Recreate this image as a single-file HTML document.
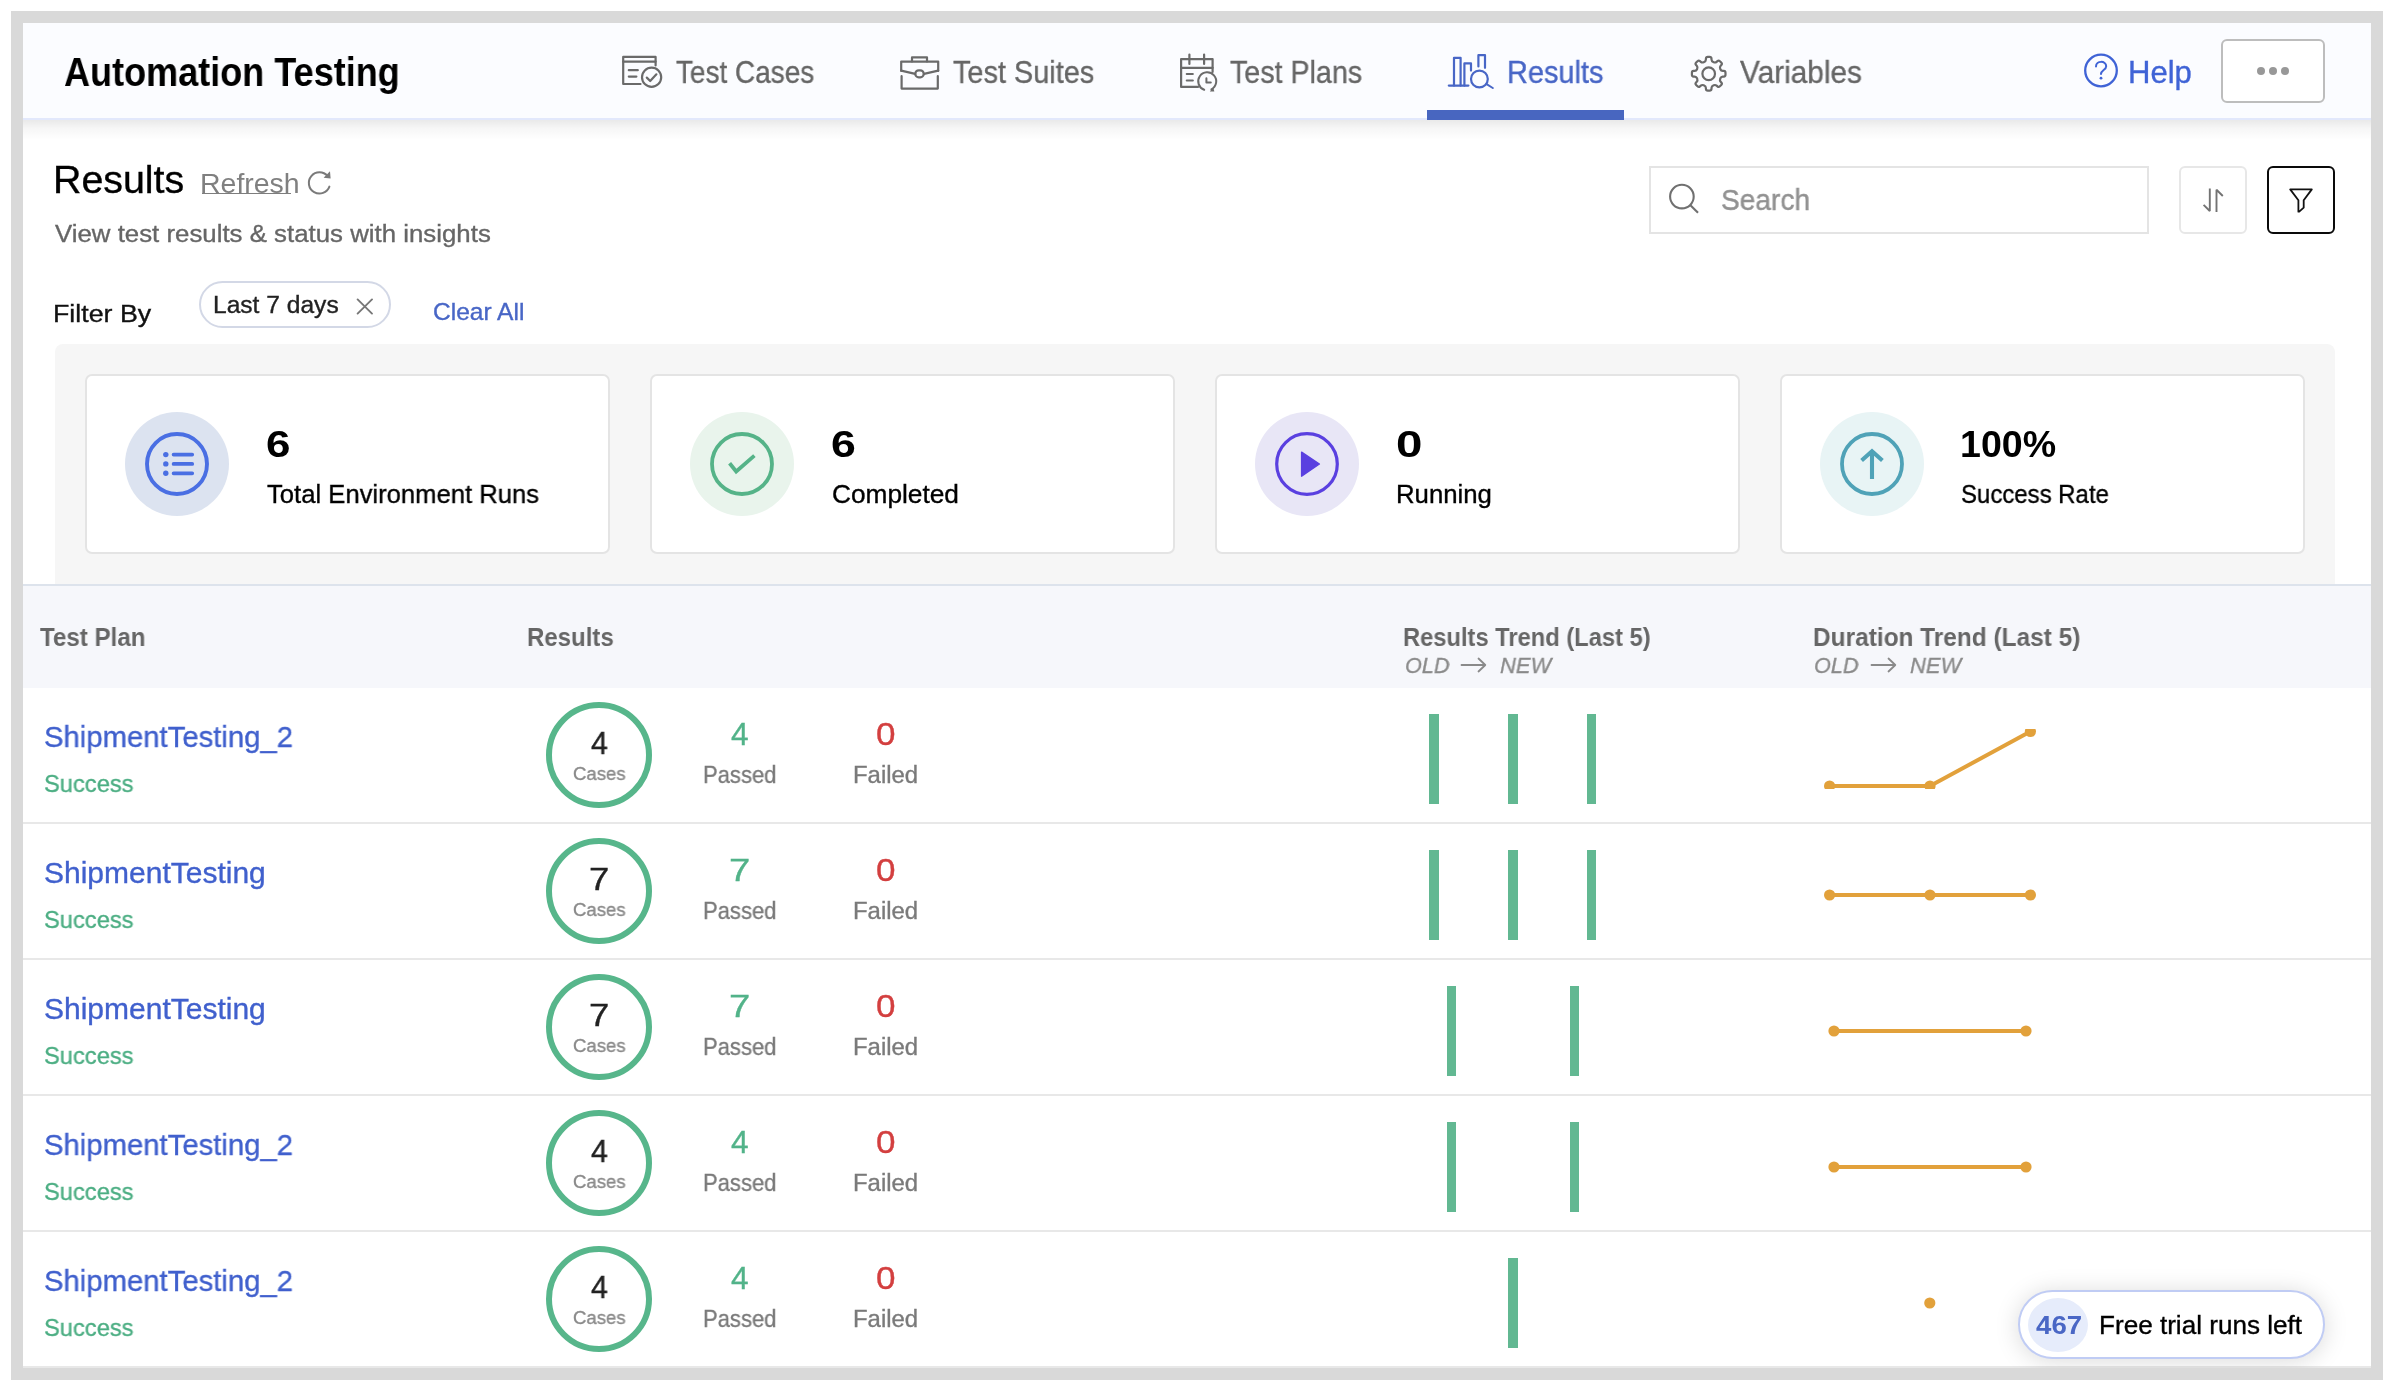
<!DOCTYPE html>
<html><head><meta charset="utf-8"><title>Automation Testing - Results</title>
<style>
html,body{margin:0;padding:0;background:#fff;}
body{width:2394px;height:1391px;position:relative;overflow:hidden;font-family:"Liberation Sans",sans-serif;}
.b{position:absolute;box-sizing:border-box;}
.t{position:absolute;white-space:nowrap;transform-origin:0 0;display:block;will-change:transform;}
svg{overflow:visible;}
</style></head><body>
<div class="b" style="left:23px;top:23px;width:2348px;height:1345px;background:#ffffff;"></div>
<div class="b" style="left:23px;top:119.5px;width:2348px;height:20px;background:linear-gradient(to bottom,rgba(0,0,0,0.085),rgba(0,0,0,0.035) 42%,rgba(0,0,0,0));"></div>
<div class="b" style="left:23px;top:23px;width:2348px;height:97px;background:#fbfcff;border-bottom:2px solid #e2e8fc;"></div>
<span class="t" style="left:64.10px;top:53.00px;font-size:39.77px;line-height:39.77px;color:#000;transform:scaleX(0.9066);font-weight:700;">Automation Testing</span>
<span class="t" style="left:675.65px;top:58.00px;font-size:30.7px;line-height:30.7px;color:#666666;transform:scaleX(0.9103);-webkit-text-stroke:0.35px;">Test Cases</span>
<span class="t" style="left:952.76px;top:58.00px;font-size:30.7px;line-height:30.7px;color:#666666;transform:scaleX(0.9409);-webkit-text-stroke:0.35px;">Test Suites</span>
<span class="t" style="left:1230.17px;top:58.00px;font-size:30.7px;line-height:30.7px;color:#666666;transform:scaleX(0.9332);-webkit-text-stroke:0.35px;">Test Plans</span>
<span class="t" style="left:1506.63px;top:58.00px;font-size:30.7px;line-height:30.7px;color:#4866c6;transform:scaleX(0.9421);-webkit-text-stroke:0.35px;">Results</span>
<span class="t" style="left:1740.38px;top:58.00px;font-size:30.7px;line-height:30.7px;color:#666666;transform:scaleX(0.9704);-webkit-text-stroke:0.35px;">Variables</span>
<span class="t" style="left:2128.25px;top:58.00px;font-size:30.7px;line-height:30.7px;color:#3f63d6;transform:scaleX(1.0113);-webkit-text-stroke:0.35px;">Help</span>
<div class="b" style="left:1427px;top:110px;width:197px;height:10px;background:#4866c0;"></div>
<div class="b" style="left:2221px;top:39px;width:104px;height:64px;background:#fff;border:2.2px solid #bdbdbd;border-radius:6px;"></div>
<div class="b" style="left:2256.8px;top:67px;width:8.2px;height:8.2px;background:#989898;border-radius:50%;"></div>
<div class="b" style="left:2268.9px;top:67px;width:8.2px;height:8.2px;background:#989898;border-radius:50%;"></div>
<div class="b" style="left:2281.0px;top:67px;width:8.2px;height:8.2px;background:#989898;border-radius:50%;"></div>
<span class="t" style="left:53.07px;top:161.00px;font-size:38.37px;line-height:38.37px;color:#000;transform:scaleX(1.0259);-webkit-text-stroke:0.35px;">Results</span>
<span class="t" style="left:200.07px;top:169.00px;font-size:28.47px;line-height:28.47px;color:#808080;transform:scaleX(0.9970);-webkit-text-stroke:0.35px;-webkit-text-stroke:0;">Refresh</span>
<div class="b" style="left:202px;top:193px;width:89px;height:1.4px;background:#7d7d7d;"></div>
<span class="t" style="left:55.40px;top:222.00px;font-size:24.42px;line-height:24.42px;color:#666;transform:scaleX(1.0580);-webkit-text-stroke:0.35px;">View test results &amp; status with insights</span>
<div class="b" style="left:1649px;top:166px;width:500px;height:68px;background:#fff;border:2px solid #e4e4e4;"></div>
<span class="t" style="left:1721.03px;top:185.00px;font-size:30.14px;line-height:30.14px;color:#929292;transform:scaleX(0.9332);-webkit-text-stroke:0.35px;-webkit-text-stroke:0.45px;">Search</span>
<div class="b" style="left:2179px;top:166px;width:68px;height:67.7px;background:#fff;border:2px solid #e7e7e7;border-radius:6px;"></div>
<div class="b" style="left:2267px;top:166px;width:68px;height:67.8px;background:#fff;border:2.3px solid #0a0a0a;border-radius:6px;"></div>
<span class="t" style="left:53.30px;top:302.00px;font-size:24.7px;line-height:24.7px;color:#111;transform:scaleX(1.0847);-webkit-text-stroke:0.35px;">Filter By</span>
<div class="b" style="left:198.5px;top:281px;width:192px;height:46.5px;background:#fff;border:2px solid #d3d8e6;border-radius:24px;"></div>
<span class="t" style="left:213.38px;top:294.00px;font-size:23.44px;line-height:23.44px;color:#222;transform:scaleX(1.0486);-webkit-text-stroke:0.35px;">Last 7 days</span>
<span class="t" style="left:432.75px;top:301.00px;font-size:23.02px;line-height:23.02px;color:#4866c6;transform:scaleX(1.0658);-webkit-text-stroke:0.35px;">Clear All</span>
<div class="b" style="left:55px;top:344px;width:2280px;height:241px;background:#f6f6f6;border-radius:8px 8px 0 0;"></div>
<div class="b" style="left:85px;top:374px;width:525px;height:180px;background:#fff;border:2px solid #e4e4e4;border-radius:7px;"></div>
<div class="b" style="left:125px;top:412px;width:104px;height:104px;background:#dce3f0;border-radius:50%;"></div>
<span class="t" style="left:266.02px;top:427.00px;font-size:36.92px;line-height:36.92px;color:#000;transform:scaleX(1.1920);font-weight:700;">6</span>
<span class="t" style="left:266.88px;top:482.00px;font-size:25.67px;line-height:25.67px;color:#000;transform:scaleX(0.9988);-webkit-text-stroke:0.35px;">Total Environment Runs</span>
<div class="b" style="left:650px;top:374px;width:525px;height:180px;background:#fff;border:2px solid #e4e4e4;border-radius:7px;"></div>
<div class="b" style="left:690px;top:412px;width:104px;height:104px;background:#e9f4ec;border-radius:50%;"></div>
<span class="t" style="left:831.39px;top:427.00px;font-size:36.92px;line-height:36.92px;color:#000;transform:scaleX(1.2106);font-weight:700;">6</span>
<span class="t" style="left:831.66px;top:482.00px;font-size:25.67px;line-height:25.67px;color:#000;transform:scaleX(1.0232);-webkit-text-stroke:0.35px;">Completed</span>
<div class="b" style="left:1215px;top:374px;width:525px;height:180px;background:#fff;border:2px solid #e4e4e4;border-radius:7px;"></div>
<div class="b" style="left:1255px;top:412px;width:104px;height:104px;background:#e8e6f6;border-radius:50%;"></div>
<span class="t" style="left:1396.15px;top:427.00px;font-size:36.92px;line-height:36.92px;color:#000;transform:scaleX(1.2860);font-weight:700;">0</span>
<span class="t" style="left:1396.39px;top:482.00px;font-size:25.67px;line-height:25.67px;color:#000;transform:scaleX(1.0036);-webkit-text-stroke:0.35px;">Running</span>
<div class="b" style="left:1780px;top:374px;width:525px;height:180px;background:#fff;border:2px solid #e4e4e4;border-radius:7px;"></div>
<div class="b" style="left:1820px;top:412px;width:104px;height:104px;background:#e8f4f5;border-radius:50%;"></div>
<span class="t" style="left:1960.13px;top:427.00px;font-size:36.92px;line-height:36.92px;color:#000;transform:scaleX(1.0174);font-weight:700;">100%</span>
<span class="t" style="left:1961.42px;top:482.00px;font-size:25.67px;line-height:25.67px;color:#000;transform:scaleX(0.9342);-webkit-text-stroke:0.35px;">Success Rate</span>
<div class="b" style="left:23px;top:584px;width:2348px;height:104px;background:#f6f7fb;border-top:2px solid #dde3ec;"></div>
<span class="t" style="left:39.81px;top:625.00px;font-size:25.67px;line-height:25.67px;color:#666;transform:scaleX(0.9406);font-weight:700;">Test Plan</span>
<span class="t" style="left:527.19px;top:625.00px;font-size:25.67px;line-height:25.67px;color:#666;transform:scaleX(0.9361);font-weight:700;">Results</span>
<span class="t" style="left:1402.81px;top:625.00px;font-size:25.67px;line-height:25.67px;color:#666;transform:scaleX(0.9239);font-weight:700;">Results Trend (Last 5)</span>
<span class="t" style="left:1812.86px;top:625.00px;font-size:25.67px;line-height:25.67px;color:#666;transform:scaleX(0.9523);font-weight:700;">Duration Trend (Last 5)</span>
<span class="t" style="left:1404.53px;top:654.00px;font-size:22.82px;line-height:22.82px;color:#8a8a8a;transform:scaleX(0.9483);-webkit-text-stroke:0.35px;font-style:italic;">OLD</span>
<span class="t" style="left:1500.12px;top:654.00px;font-size:22.82px;line-height:22.82px;color:#8a8a8a;transform:scaleX(0.9630);-webkit-text-stroke:0.35px;font-style:italic;">NEW</span>
<svg class="b" style="left:1455px;top:655px;" width="40" height="20" viewBox="1455 655 40 20" fill="none" stroke-linecap="round" stroke-linejoin="round"><path d="M1461.5 665 H1485 M1478.5 658.5 L1485.3 665 L1478.5 671.5" stroke="#8a8a8a" stroke-width="1.8"/></svg>
<span class="t" style="left:1814.33px;top:654.00px;font-size:22.82px;line-height:22.82px;color:#8a8a8a;transform:scaleX(0.9483);-webkit-text-stroke:0.35px;font-style:italic;">OLD</span>
<span class="t" style="left:1909.76px;top:654.00px;font-size:22.82px;line-height:22.82px;color:#8a8a8a;transform:scaleX(0.9630);-webkit-text-stroke:0.35px;font-style:italic;">NEW</span>
<svg class="b" style="left:1864.8px;top:655px;" width="40" height="20" viewBox="1864.8 655 40 20" fill="none" stroke-linecap="round" stroke-linejoin="round"><path d="M1871.3 665 H1894.8 M1888.3 658.5 L1895.1 665 L1888.3 671.5" stroke="#8a8a8a" stroke-width="1.8"/></svg>
<div class="b" style="left:23px;top:822px;width:2348px;height:2px;background:#e8e8e8;"></div>
<span class="t" style="left:44.18px;top:722.00px;font-size:29.72px;line-height:29.72px;color:#4060cd;transform:scaleX(0.9850);-webkit-text-stroke:0.35px;">ShipmentTesting_2</span>
<span class="t" style="left:44.43px;top:772.00px;font-size:24.14px;line-height:24.14px;color:#4cae83;transform:scaleX(0.9824);-webkit-text-stroke:0.35px;">Success</span>
<div class="b" style="left:546px;top:702px;width:106px;height:106px;border:6.5px solid #57b68b;border-radius:50%;"></div>
<span class="t" style="left:590.60px;top:728.00px;font-size:31.1px;line-height:31.1px;color:#222;transform:scaleX(0.9767);-webkit-text-stroke:0.35px;">4</span>
<span class="t" style="left:572.96px;top:765.00px;font-size:18.7px;line-height:18.7px;color:#8a8a8a;transform:scaleX(0.9909);-webkit-text-stroke:0.35px;">Cases</span>
<span class="t" style="left:730.67px;top:719.00px;font-size:31.25px;line-height:31.25px;color:#52b389;transform:scaleX(1.0117);-webkit-text-stroke:0.35px;">4</span>
<span class="t" style="left:703.49px;top:764.00px;font-size:23.58px;line-height:23.58px;color:#7a7a7a;transform:scaleX(0.9336);-webkit-text-stroke:0.35px;">Passed</span>
<span class="t" style="left:875.73px;top:719.00px;font-size:31.25px;line-height:31.25px;color:#d33f3f;transform:scaleX(1.1220);-webkit-text-stroke:0.35px;">0</span>
<span class="t" style="left:853.44px;top:764.00px;font-size:23.58px;line-height:23.58px;color:#7a7a7a;transform:scaleX(1.0133);-webkit-text-stroke:0.35px;">Failed</span>
<div class="b" style="left:1429.45px;top:714px;width:9.5px;height:90px;background:#62b892;"></div>
<div class="b" style="left:1508.25px;top:714px;width:9.5px;height:90px;background:#62b892;"></div>
<div class="b" style="left:1586.95px;top:714px;width:9.5px;height:90px;background:#62b892;"></div>
<svg class="b" style="left:1800px;top:729px;overflow:hidden" width="260" height="60" viewBox="1800 729 260 60"><polyline points="1829.6,786 1930,786 2030.4,731.5" stroke="#e2a13b" stroke-width="4" fill="none"/><circle cx="1829.6" cy="786" r="5.6" fill="#e2a13b"/><circle cx="1930" cy="786" r="5.6" fill="#e2a13b"/><circle cx="2030.4" cy="731.5" r="5.6" fill="#e2a13b"/></svg>
<div class="b" style="left:23px;top:958px;width:2348px;height:2px;background:#e8e8e8;"></div>
<span class="t" style="left:44.15px;top:858.00px;font-size:29.72px;line-height:29.72px;color:#4060cd;transform:scaleX(1.0093);-webkit-text-stroke:0.35px;">ShipmentTesting</span>
<span class="t" style="left:44.43px;top:908.00px;font-size:24.14px;line-height:24.14px;color:#4cae83;transform:scaleX(0.9824);-webkit-text-stroke:0.35px;">Success</span>
<div class="b" style="left:546px;top:838px;width:106px;height:106px;border:6.5px solid #57b68b;border-radius:50%;"></div>
<span class="t" style="left:589.44px;top:864.00px;font-size:31.1px;line-height:31.1px;color:#222;transform:scaleX(1.1731);-webkit-text-stroke:0.35px;">7</span>
<span class="t" style="left:572.96px;top:901.00px;font-size:18.7px;line-height:18.7px;color:#8a8a8a;transform:scaleX(0.9909);-webkit-text-stroke:0.35px;">Cases</span>
<span class="t" style="left:729.45px;top:855.00px;font-size:31.25px;line-height:31.25px;color:#52b389;transform:scaleX(1.2237);-webkit-text-stroke:0.35px;">7</span>
<span class="t" style="left:703.49px;top:900.00px;font-size:23.58px;line-height:23.58px;color:#7a7a7a;transform:scaleX(0.9336);-webkit-text-stroke:0.35px;">Passed</span>
<span class="t" style="left:875.73px;top:855.00px;font-size:31.25px;line-height:31.25px;color:#d33f3f;transform:scaleX(1.1220);-webkit-text-stroke:0.35px;">0</span>
<span class="t" style="left:853.44px;top:900.00px;font-size:23.58px;line-height:23.58px;color:#7a7a7a;transform:scaleX(1.0133);-webkit-text-stroke:0.35px;">Failed</span>
<div class="b" style="left:1429.45px;top:850px;width:9.5px;height:90px;background:#62b892;"></div>
<div class="b" style="left:1508.25px;top:850px;width:9.5px;height:90px;background:#62b892;"></div>
<div class="b" style="left:1586.95px;top:850px;width:9.5px;height:90px;background:#62b892;"></div>
<svg class="b" style="left:1800px;top:865px;overflow:hidden" width="260" height="60" viewBox="1800 865 260 60"><polyline points="1829.6,895 1930,895 2030.4,895" stroke="#e2a13b" stroke-width="4" fill="none"/><circle cx="1829.6" cy="895" r="5.6" fill="#e2a13b"/><circle cx="1930" cy="895" r="5.6" fill="#e2a13b"/><circle cx="2030.4" cy="895" r="5.6" fill="#e2a13b"/></svg>
<div class="b" style="left:23px;top:1094px;width:2348px;height:2px;background:#e8e8e8;"></div>
<span class="t" style="left:44.15px;top:994.00px;font-size:29.72px;line-height:29.72px;color:#4060cd;transform:scaleX(1.0093);-webkit-text-stroke:0.35px;">ShipmentTesting</span>
<span class="t" style="left:44.43px;top:1044.00px;font-size:24.14px;line-height:24.14px;color:#4cae83;transform:scaleX(0.9824);-webkit-text-stroke:0.35px;">Success</span>
<div class="b" style="left:546px;top:974px;width:106px;height:106px;border:6.5px solid #57b68b;border-radius:50%;"></div>
<span class="t" style="left:589.44px;top:1000.00px;font-size:31.1px;line-height:31.1px;color:#222;transform:scaleX(1.1731);-webkit-text-stroke:0.35px;">7</span>
<span class="t" style="left:572.96px;top:1037.00px;font-size:18.7px;line-height:18.7px;color:#8a8a8a;transform:scaleX(0.9909);-webkit-text-stroke:0.35px;">Cases</span>
<span class="t" style="left:729.45px;top:991.00px;font-size:31.25px;line-height:31.25px;color:#52b389;transform:scaleX(1.2237);-webkit-text-stroke:0.35px;">7</span>
<span class="t" style="left:703.49px;top:1036.00px;font-size:23.58px;line-height:23.58px;color:#7a7a7a;transform:scaleX(0.9336);-webkit-text-stroke:0.35px;">Passed</span>
<span class="t" style="left:875.73px;top:991.00px;font-size:31.25px;line-height:31.25px;color:#d33f3f;transform:scaleX(1.1220);-webkit-text-stroke:0.35px;">0</span>
<span class="t" style="left:853.44px;top:1036.00px;font-size:23.58px;line-height:23.58px;color:#7a7a7a;transform:scaleX(1.0133);-webkit-text-stroke:0.35px;">Failed</span>
<div class="b" style="left:1446.95px;top:986px;width:9.5px;height:90px;background:#62b892;"></div>
<div class="b" style="left:1569.65px;top:986px;width:9.5px;height:90px;background:#62b892;"></div>
<svg class="b" style="left:1800px;top:1001px;overflow:hidden" width="260" height="60" viewBox="1800 1001 260 60"><polyline points="1834,1031 2026,1031" stroke="#e2a13b" stroke-width="4" fill="none"/><circle cx="1834" cy="1031" r="5.6" fill="#e2a13b"/><circle cx="2026" cy="1031" r="5.6" fill="#e2a13b"/></svg>
<div class="b" style="left:23px;top:1230px;width:2348px;height:2px;background:#e8e8e8;"></div>
<span class="t" style="left:44.18px;top:1130.00px;font-size:29.72px;line-height:29.72px;color:#4060cd;transform:scaleX(0.9850);-webkit-text-stroke:0.35px;">ShipmentTesting_2</span>
<span class="t" style="left:44.43px;top:1180.00px;font-size:24.14px;line-height:24.14px;color:#4cae83;transform:scaleX(0.9824);-webkit-text-stroke:0.35px;">Success</span>
<div class="b" style="left:546px;top:1110px;width:106px;height:106px;border:6.5px solid #57b68b;border-radius:50%;"></div>
<span class="t" style="left:590.60px;top:1136.00px;font-size:31.1px;line-height:31.1px;color:#222;transform:scaleX(0.9767);-webkit-text-stroke:0.35px;">4</span>
<span class="t" style="left:572.96px;top:1173.00px;font-size:18.7px;line-height:18.7px;color:#8a8a8a;transform:scaleX(0.9909);-webkit-text-stroke:0.35px;">Cases</span>
<span class="t" style="left:730.67px;top:1127.00px;font-size:31.25px;line-height:31.25px;color:#52b389;transform:scaleX(1.0117);-webkit-text-stroke:0.35px;">4</span>
<span class="t" style="left:703.49px;top:1172.00px;font-size:23.58px;line-height:23.58px;color:#7a7a7a;transform:scaleX(0.9336);-webkit-text-stroke:0.35px;">Passed</span>
<span class="t" style="left:875.73px;top:1127.00px;font-size:31.25px;line-height:31.25px;color:#d33f3f;transform:scaleX(1.1220);-webkit-text-stroke:0.35px;">0</span>
<span class="t" style="left:853.44px;top:1172.00px;font-size:23.58px;line-height:23.58px;color:#7a7a7a;transform:scaleX(1.0133);-webkit-text-stroke:0.35px;">Failed</span>
<div class="b" style="left:1446.95px;top:1122px;width:9.5px;height:90px;background:#62b892;"></div>
<div class="b" style="left:1569.65px;top:1122px;width:9.5px;height:90px;background:#62b892;"></div>
<svg class="b" style="left:1800px;top:1137px;overflow:hidden" width="260" height="60" viewBox="1800 1137 260 60"><polyline points="1834,1167 2026,1167" stroke="#e2a13b" stroke-width="4" fill="none"/><circle cx="1834" cy="1167" r="5.6" fill="#e2a13b"/><circle cx="2026" cy="1167" r="5.6" fill="#e2a13b"/></svg>
<div class="b" style="left:23px;top:1366px;width:2348px;height:2px;background:#e8e8e8;"></div>
<span class="t" style="left:44.18px;top:1266.00px;font-size:29.72px;line-height:29.72px;color:#4060cd;transform:scaleX(0.9850);-webkit-text-stroke:0.35px;">ShipmentTesting_2</span>
<span class="t" style="left:44.43px;top:1316.00px;font-size:24.14px;line-height:24.14px;color:#4cae83;transform:scaleX(0.9824);-webkit-text-stroke:0.35px;">Success</span>
<div class="b" style="left:546px;top:1246px;width:106px;height:106px;border:6.5px solid #57b68b;border-radius:50%;"></div>
<span class="t" style="left:590.60px;top:1272.00px;font-size:31.1px;line-height:31.1px;color:#222;transform:scaleX(0.9767);-webkit-text-stroke:0.35px;">4</span>
<span class="t" style="left:572.96px;top:1309.00px;font-size:18.7px;line-height:18.7px;color:#8a8a8a;transform:scaleX(0.9909);-webkit-text-stroke:0.35px;">Cases</span>
<span class="t" style="left:730.67px;top:1263.00px;font-size:31.25px;line-height:31.25px;color:#52b389;transform:scaleX(1.0117);-webkit-text-stroke:0.35px;">4</span>
<span class="t" style="left:703.49px;top:1308.00px;font-size:23.58px;line-height:23.58px;color:#7a7a7a;transform:scaleX(0.9336);-webkit-text-stroke:0.35px;">Passed</span>
<span class="t" style="left:875.73px;top:1263.00px;font-size:31.25px;line-height:31.25px;color:#d33f3f;transform:scaleX(1.1220);-webkit-text-stroke:0.35px;">0</span>
<span class="t" style="left:853.44px;top:1308.00px;font-size:23.58px;line-height:23.58px;color:#7a7a7a;transform:scaleX(1.0133);-webkit-text-stroke:0.35px;">Failed</span>
<div class="b" style="left:1508.25px;top:1258px;width:9.5px;height:90px;background:#62b892;"></div>
<svg class="b" style="left:1800px;top:1273px;overflow:hidden" width="260" height="60" viewBox="1800 1273 260 60"><circle cx="1929.8" cy="1303" r="5.6" fill="#e2a13b"/></svg>
<div class="b" style="left:2018.3px;top:1290.2px;width:306.3px;height:69.2px;background:#fff;border:2px solid #c0ccf4;border-radius:35px;box-shadow:0 2px 24px rgba(0,0,0,0.15);"></div>
<div class="b" style="left:2027.8px;top:1297.8px;width:60px;height:54px;background:#e6ecfb;border-radius:30px/27px;"></div>
<span class="t" style="left:2035.85px;top:1312.00px;font-size:26.6px;line-height:26.6px;color:#4a67c5;transform:scaleX(1.0397);font-weight:700;">467</span>
<span class="t" style="left:2099.46px;top:1313.00px;font-size:25.53px;line-height:25.53px;color:#000;transform:scaleX(1.0227);-webkit-text-stroke:0.35px;">Free trial runs left</span>
<svg class="b" style="left:620px;top:54px;" width="44" height="36" viewBox="620 54 44 36" fill="none" stroke-linecap="round" stroke-linejoin="round"><g stroke="#6a6a6a" stroke-width="2.2">
<path d="M640.5 84 H623.2 V56.9 H655.6 V65.5"/><path d="M623.2 61.6 H655.6"/>
<path d="M628.8 70.2 H637.8 M628.8 76.6 H636.4"/>
<circle cx="651.6" cy="77.3" r="9.6"/><path d="M646.8 77.6 L650.2 81 L656.4 74.3"/></g></svg>
<svg class="b" style="left:898px;top:54px;" width="44" height="38" viewBox="898 54 44 38" fill="none" stroke-linecap="round" stroke-linejoin="round"><g stroke="#6a6a6a" stroke-width="2.2">
<path d="M912 61.4 V57.4 H927 V61.4"/>
<path d="M901.2 71 V61.6 H938.2 V71"/>
<path d="M901.2 70.6 L915.2 73.9 M924 73.9 L938.2 70.6"/>
<rect x="915.3" y="70.3" width="8.4" height="7" rx="3.4"/>
<path d="M901.6 76.2 V88.6 H937.8 V76.2"/></g></svg>
<svg class="b" style="left:1178px;top:52px;" width="44" height="42" viewBox="1178 52 44 42" fill="none" stroke-linecap="round" stroke-linejoin="round"><g stroke="#6a6a6a" stroke-width="2.2">
<path d="M1198 86.9 H1181.1 V59.1 H1212.6 V72"/><path d="M1181.1 67.8 H1212.6"/>
<path d="M1189.4 54.6 V64 M1204.1 54.6 V64"/>
<path d="M1186.8 74 H1192.8 M1186.8 80.5 H1192.8"/>
<path d="M1204.2 89.8 A9 9 0 1 1 1211.4 89.3" stroke-width="2"/>
<path d="M1206.4 78.2 V82.4 H1210.8" stroke-width="2"/></g>
<path d="M1209.8 91.5 L1214.3 91.5 L1213.3 87.2 Z" fill="#6a6a6a"/></svg>
<svg class="b" style="left:1446px;top:52px;" width="50" height="40" viewBox="1446 52 50 40" fill="none" stroke-linecap="round" stroke-linejoin="round"><g stroke="#4866c6" stroke-width="2.2">
<path d="M1448.8 85.6 H1468.4"/>
<path d="M1454 85.6 V57.8 H1460.6 V85.6"/>
<path d="M1464.4 85.6 V63.4 H1471 V70.6"/>
<path d="M1478.4 66.4 V55.2 H1485 V67.8"/>
<circle cx="1479.4" cy="79" r="8.4"/><path d="M1486.6 84.2 L1492.8 88" stroke-width="2"/></g></svg>
<svg class="b" style="left:1688px;top:54px;" width="42" height="40" viewBox="1688 54 42 40" fill="none" stroke-linecap="round" stroke-linejoin="round"><g stroke="#6a6a6a" stroke-width="2.2"><path d="M1705.92 58.66 Q1706.04 56.96 1707.74 56.96 L1709.66 56.96 Q1711.36 56.96 1711.48 58.66 L1711.55 59.70 Q1711.66 61.40 1713.24 62.05 L1713.77 62.27 Q1715.34 62.92 1716.62 61.80 L1717.41 61.11 Q1718.69 60.00 1719.89 61.20 L1721.25 62.56 Q1722.45 63.76 1721.34 65.04 L1720.65 65.83 Q1719.53 67.11 1720.18 68.68 L1720.40 69.21 Q1721.05 70.79 1722.75 70.90 L1723.79 70.97 Q1725.49 71.09 1725.49 72.79 L1725.49 74.71 Q1725.49 76.41 1723.79 76.53 L1722.75 76.60 Q1721.05 76.71 1720.40 78.29 L1720.18 78.82 Q1719.53 80.39 1720.65 81.67 L1721.34 82.46 Q1722.45 83.74 1721.25 84.94 L1719.89 86.30 Q1718.69 87.50 1717.41 86.39 L1716.62 85.70 Q1715.34 84.58 1713.77 85.23 L1713.24 85.45 Q1711.66 86.10 1711.55 87.80 L1711.48 88.84 Q1711.36 90.54 1709.66 90.54 L1707.74 90.54 Q1706.04 90.54 1705.92 88.84 L1705.85 87.80 Q1705.74 86.10 1704.16 85.45 L1703.63 85.23 Q1702.06 84.58 1700.78 85.70 L1699.99 86.39 Q1698.71 87.50 1697.51 86.30 L1696.15 84.94 Q1694.95 83.74 1696.06 82.46 L1696.75 81.67 Q1697.87 80.39 1697.22 78.82 L1697.00 78.29 Q1696.35 76.71 1694.65 76.60 L1693.61 76.53 Q1691.91 76.41 1691.91 74.71 L1691.91 72.79 Q1691.91 71.09 1693.61 70.97 L1694.65 70.90 Q1696.35 70.79 1697.00 69.21 L1697.22 68.68 Q1697.87 67.11 1696.75 65.83 L1696.06 65.04 Q1694.95 63.76 1696.15 62.56 L1697.51 61.20 Q1698.71 60.00 1699.99 61.11 L1700.78 61.80 Q1702.06 62.92 1703.63 62.27 L1704.16 62.05 Q1705.74 61.40 1705.85 59.70 Z"/><circle cx="1708.7" cy="73.75" r="6.3"/></g></svg>
<svg class="b" style="left:2082px;top:52px;" width="38" height="38" viewBox="2082 52 38 38" fill="none" stroke-linecap="round" stroke-linejoin="round"><circle cx="2101" cy="70.5" r="15.8" stroke="#3f63d6" stroke-width="2.3"/>
<path d="M2096 66.4 C2096 60.4 2106.2 60.4 2106.2 66.2 C2106.2 70 2101 70 2101 74" stroke="#3f63d6" stroke-width="2"/>
<circle cx="2101" cy="78.2" r="1.4" fill="#3f63d6"/></svg>
<svg class="b" style="left:305px;top:169px;" width="30" height="28" viewBox="305 169 30 28" fill="none" stroke-linecap="round" stroke-linejoin="round"><path d="M327.6 176.2 A10.6 10.6 0 1 0 329.4 186.6" stroke="#7a7a7a" stroke-width="2"/>
<path d="M323.6 177.8 L330.6 178.4 L330 171.2 Z" fill="#7a7a7a" stroke="none"/></svg>
<svg class="b" style="left:1666px;top:182px;" width="36" height="34" viewBox="1666 182 36 34" fill="none" stroke-linecap="round" stroke-linejoin="round"><circle cx="1681.9" cy="196.6" r="11.8" stroke="#707070" stroke-width="2.1"/><path d="M1690.4 205.2 L1698 212.8" stroke="#707070" stroke-width="2.1" stroke-linecap="butt"/></svg>
<svg class="b" style="left:2200px;top:186px;" width="28" height="30" viewBox="2200 186 28 30" fill="none" stroke-linecap="round" stroke-linejoin="round"><g stroke="#737373" stroke-width="1.9" stroke-linecap="butt" stroke-linejoin="miter"><path d="M2209.8 188.6 V211 L2203.6 204.8" stroke-linejoin="bevel"/><path d="M2216.5 212 V189.8 L2222.8 196" stroke-linejoin="bevel"/></g></svg>
<svg class="b" style="left:2287px;top:186px;" width="30" height="30" viewBox="2287 186 30 30" fill="none" stroke-linecap="round" stroke-linejoin="round"><path d="M2290.2 189.4 H2311.8 L2303.7 200.3 V207.7 L2299.2 211.7 H2298.4 V200.3 Z" stroke="#111" stroke-width="1.8"/></svg>
<svg class="b" style="left:355px;top:297px;" width="20" height="20" viewBox="355 297 20 20" fill="none" stroke-linecap="round" stroke-linejoin="round"><path d="M357.6 299.4 L372 313.6 M372 299.4 L357.6 313.6" stroke="#777" stroke-width="1.9"/></svg>
<svg class="b" style="left:140px;top:428px;" width="74" height="74" viewBox="140 428 74 74" fill="none" stroke-linecap="round" stroke-linejoin="round"><circle cx="177" cy="464" r="30" stroke="#4a6fe3" stroke-width="3.9"/>
<g stroke="#4a6fe3" stroke-width="3.8"><path d="M173.6 454.6 H192.2 M173.6 463.9 H192.2 M173.6 473.3 H192.2"/></g>
<g fill="#4a6fe3"><circle cx="165.8" cy="454.6" r="2.7"/><circle cx="165.8" cy="463.9" r="2.7"/><circle cx="165.8" cy="473.3" r="2.7"/></g></svg>
<svg class="b" style="left:705px;top:428px;" width="74" height="74" viewBox="705 428 74 74" fill="none" stroke-linecap="round" stroke-linejoin="round"><circle cx="742" cy="464" r="30" stroke="#55b388" stroke-width="3.8"/>
<path d="M729.6 463.2 L736.2 471.4 L754.4 455.6" stroke="#55b388" stroke-width="3.8" stroke-linecap="butt" stroke-linejoin="miter"/></svg>
<svg class="b" style="left:1270px;top:428px;" width="74" height="74" viewBox="1270 428 74 74" fill="none" stroke-linecap="round" stroke-linejoin="round"><circle cx="1307" cy="464" r="30.3" stroke="#5a40e0" stroke-width="3.2"/>
<path d="M1301.6 452.2 L1319.4 464 L1301.6 476.2 Z" fill="#5a40e0" stroke="#5a40e0" stroke-width="1.4"/></svg>
<svg class="b" style="left:1835px;top:428px;" width="74" height="74" viewBox="1835 428 74 74" fill="none" stroke-linecap="round" stroke-linejoin="round"><circle cx="1872" cy="464" r="30" stroke="#4fa2b7" stroke-width="3.8"/>
<path d="M1872 479 V452 M1861.6 460.6 L1872 451.2 L1882.4 460.6" stroke="#4fa2b7" stroke-width="4.1" stroke-linecap="butt" stroke-linejoin="miter"/></svg>
<div class="b" style="left:11px;top:11px;width:2372px;height:12px;background:#d9d9d9;"></div>
<div class="b" style="left:11px;top:1368px;width:2372px;height:12px;background:#d9d9d9;"></div>
<div class="b" style="left:11px;top:11px;width:12px;height:1369px;background:#d9d9d9;"></div>
<div class="b" style="left:2371px;top:11px;width:12px;height:1369px;background:#d9d9d9;"></div>
<div class="b" style="left:0px;top:0px;width:2394px;height:11px;background:#fff;"></div>
<div class="b" style="left:0px;top:1380px;width:2394px;height:11px;background:#fff;"></div>
<div class="b" style="left:0px;top:0px;width:11px;height:1391px;background:#fff;"></div>
<div class="b" style="left:2383px;top:0px;width:11px;height:1391px;background:#fff;"></div>
</body></html>
